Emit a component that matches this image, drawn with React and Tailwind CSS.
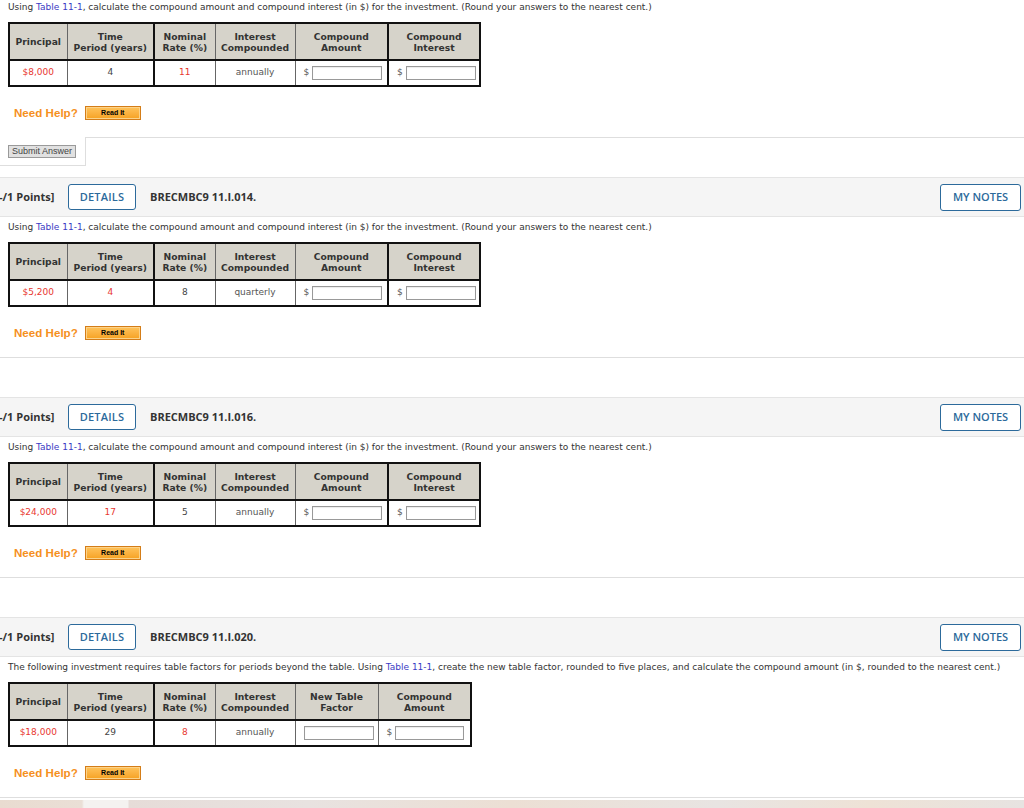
import React from "react";

const plainPrompt =
  "calculate the compound amount and compound interest (in $) for the investment. (Round your answers to the nearest cent.)";

const questions = [
  {
    code: null,
    intro: "Using ",
    outro: ", " + plainPrompt,
    cols: ["Compound Amount", "Compound Interest"],
    widths: [58, 87, 61, 80, 93, 92],
    row: { principal: "$8,000", time: "4", rate: "11", comp: "annually", red: ["principal", "rate"] },
    dollar: [true, true],
  },
  {
    code: "BRECMBC9 11.I.014.",
    intro: "Using ",
    outro: ", " + plainPrompt,
    cols: ["Compound Amount", "Compound Interest"],
    widths: [58, 87, 61, 80, 93, 92],
    row: { principal: "$5,200", time: "4", rate: "8", comp: "quarterly", red: ["principal", "time"] },
    dollar: [true, true],
  },
  {
    code: "BRECMBC9 11.I.016.",
    intro: "Using ",
    outro: ", " + plainPrompt,
    cols: ["Compound Amount", "Compound Interest"],
    widths: [58, 87, 61, 80, 93, 92],
    row: { principal: "$24,000", time: "17", rate: "5", comp: "annually", red: ["principal", "time"] },
    dollar: [true, true],
  },
  {
    code: "BRECMBC9 11.I.020.",
    intro: "The following investment requires table factors for periods beyond the table. Using ",
    outro:
      ", create the new table factor, rounded to five places, and calculate the compound amount (in $, rounded to the nearest cent.)",
    cols: ["New Table Factor", "Compound Amount"],
    widths: [58, 87, 61, 80, 83, 93],
    row: { principal: "$18,000", time: "29", rate: "8", comp: "annually", red: ["principal", "rate"] },
    dollar: [false, true],
  },
];

const QuestionBar = ({ code }) => (
  <div className="h-[40px] flex items-center bg-[#f5f5f5] border-t border-b border-[#e4e4e4] font-['Open_Sans',sans-serif] text-[11px]">
    <span className="font-bold text-[#333] w-[69px] -ml-[1px]">-/1 Points]</span>
    <button className="h-[26px] w-[68px] rounded-[3px] border border-[#2c6a9b] bg-white text-[#2c6a9b] font-semibold tracking-[0.2px]">
      DETAILS
    </button>
    <span className="ml-[14px] font-bold text-[#333]">{code}</span>
    <button className="ml-auto mr-[3px] h-[27px] w-[81px] rounded-[3px] border border-[#2c6a9b] bg-white text-[#2c6a9b] font-semibold">
      MY NOTES
    </button>
  </div>
);

const AnswerInput = ({ dollar, boxWidth }) => (
  <div className="flex items-center pl-[8px] gap-[3px]">
    {dollar && <span className="text-[#555]">$</span>}
    <div
      className="h-[14px] border border-[#999] bg-white shadow-[inset_0_1px_1px_rgba(0,0,0,0.08)]"
      style={{ width: boxWidth }}
    />
  </div>
);

const HeaderCell = ({ children, className = "" }) => (
  <th className={`bg-[#d6d3ca] text-[#333] font-bold leading-[11px] text-center align-middle px-1 ${className}`}>
    {children}
  </th>
);

const QuestionTable = ({ q }) => {
  const [c1, c2] = q.cols;
  const redOf = (k) => (q.row.red.includes(k) ? "text-[#e8382f]" : "text-[#444]");
  const thin = "border-r border-[#666]";
  const thick = "border-r-2 border-[#111]";
  const twoLines = (label) => {
    const parts = label.split(" ");
    const last = parts.pop();
    return (
      <>
        {parts.join(" ")}
        <br />
        {last}
      </>
    );
  };
  return (
    <table
      className="ml-[8px] table-fixed border-collapse border-2 border-[#111] text-[9.2px] font-['DejaVu_Sans',sans-serif]"
      style={{ width: q.widths.reduce((a, b) => a + b, 0) }}
    >
      <colgroup>
        {q.widths.map((w, i) => (
          <col key={i} style={{ width: w }} />
        ))}
      </colgroup>
      <thead>
        <tr className="h-[37px] border-b-2 border-[#111]">
          <HeaderCell className={thin}>Principal</HeaderCell>
          <HeaderCell className={thick}>
            Time
            <br />
            Period (years)
          </HeaderCell>
          <HeaderCell className={thin}>
            Nominal
            <br />
            Rate (%)
          </HeaderCell>
          <HeaderCell className={thin}>
            Interest
            <br />
            Compounded
          </HeaderCell>
          <HeaderCell className={q.dollar[0] ? thick : thin}>{twoLines(c1)}</HeaderCell>
          <HeaderCell>{twoLines(c2)}</HeaderCell>
        </tr>
      </thead>
      <tbody>
        <tr className="h-[26px] text-[9px]">
          <td className={`text-center ${thin} ${redOf("principal")}`}>{q.row.principal}</td>
          <td className={`text-center ${thick} ${redOf("time")}`}>{q.row.time}</td>
          <td className={`text-center ${thin} ${redOf("rate")}`}>{q.row.rate}</td>
          <td className={`text-center ${thin} text-[#555]`}>{q.row.comp}</td>
          <td className={q.dollar[0] ? thick : thin}>
            <AnswerInput dollar={q.dollar[0]} boxWidth={70} />
          </td>
          <td>
            <AnswerInput dollar={q.dollar[1]} boxWidth={q.dollar[0] ? 70 : 69} />
          </td>
        </tr>
      </tbody>
    </table>
  );
};

const NeedHelp = () => (
  <div className="flex items-center pl-[14px] gap-[7px] h-[14px]">
    <span className="font-['Liberation_Sans',Arial,sans-serif] font-bold text-[11.6px] text-[#f5901e]">
      Need Help?
    </span>
    <button className="w-[56px] h-[14px] border border-[#d47d18] bg-gradient-to-b from-[#ffc35a] to-[#f6a21f] shadow-[inset_0_0_0_1px_#fcd38a] font-['Liberation_Sans',Arial,sans-serif] font-bold text-[7px] leading-[12px] text-black">
      Read It
    </button>
  </div>
);

const QuestionBody = ({ q, first }) => (
  <div className={`${first ? "pt-[2px]" : "pt-[5px] border-b border-[#dedede]"} pb-[17px]`}>
    <p className="pl-[8px] text-[9px] leading-[11px] text-[#333] font-['DejaVu_Sans',sans-serif] whitespace-nowrap">
      {q.intro}
      <span className="text-[#3b3bc4]">Table 11-1</span>
      {q.outro}
    </p>
    <div className="mt-[9px]">
      <QuestionTable q={q} />
    </div>
    <div className="mt-[19px]">
      <NeedHelp />
    </div>
  </div>
);

export default function App() {
  return (
    <div className="w-[1024px] h-[808px] overflow-hidden bg-white font-['DejaVu_Sans',sans-serif]">
      <QuestionBody q={questions[0]} first />
      <div className="flex">
        <div className="w-[86px] h-[29px] border-r border-b border-[#dedede] flex items-center pl-[8px]">
          <button className="w-[68px] h-[13px] bg-[#e1e1e1] border border-[#9a9a9a] font-['Liberation_Sans',Arial,sans-serif] text-[9px] leading-[11px] text-[#444]">
            Submit Answer
          </button>
        </div>
        <div className="flex-1 border-t border-[#dedede]" />
      </div>

      {questions.slice(1).map((q, i) => (
        <div key={q.code} className={i === 0 ? "mt-[11px]" : "mt-[39px]"}>
          <QuestionBar code={q.code} />
          <QuestionBody q={q} />
        </div>
      ))}

      <div className="mt-[2px] h-[12px] bg-[linear-gradient(90deg,#e9dbd0_0%,#eadfd6_8%,#f4f2f0_8.2%,#f4f2f0_12.5%,#e6dcd8_12.6%,#e8e2e0_30%,#ecdfd4_50%,#e8e4e2_70%,#eee2d6_85%,#e7e3e1_100%)]" />
    </div>
  );
}
